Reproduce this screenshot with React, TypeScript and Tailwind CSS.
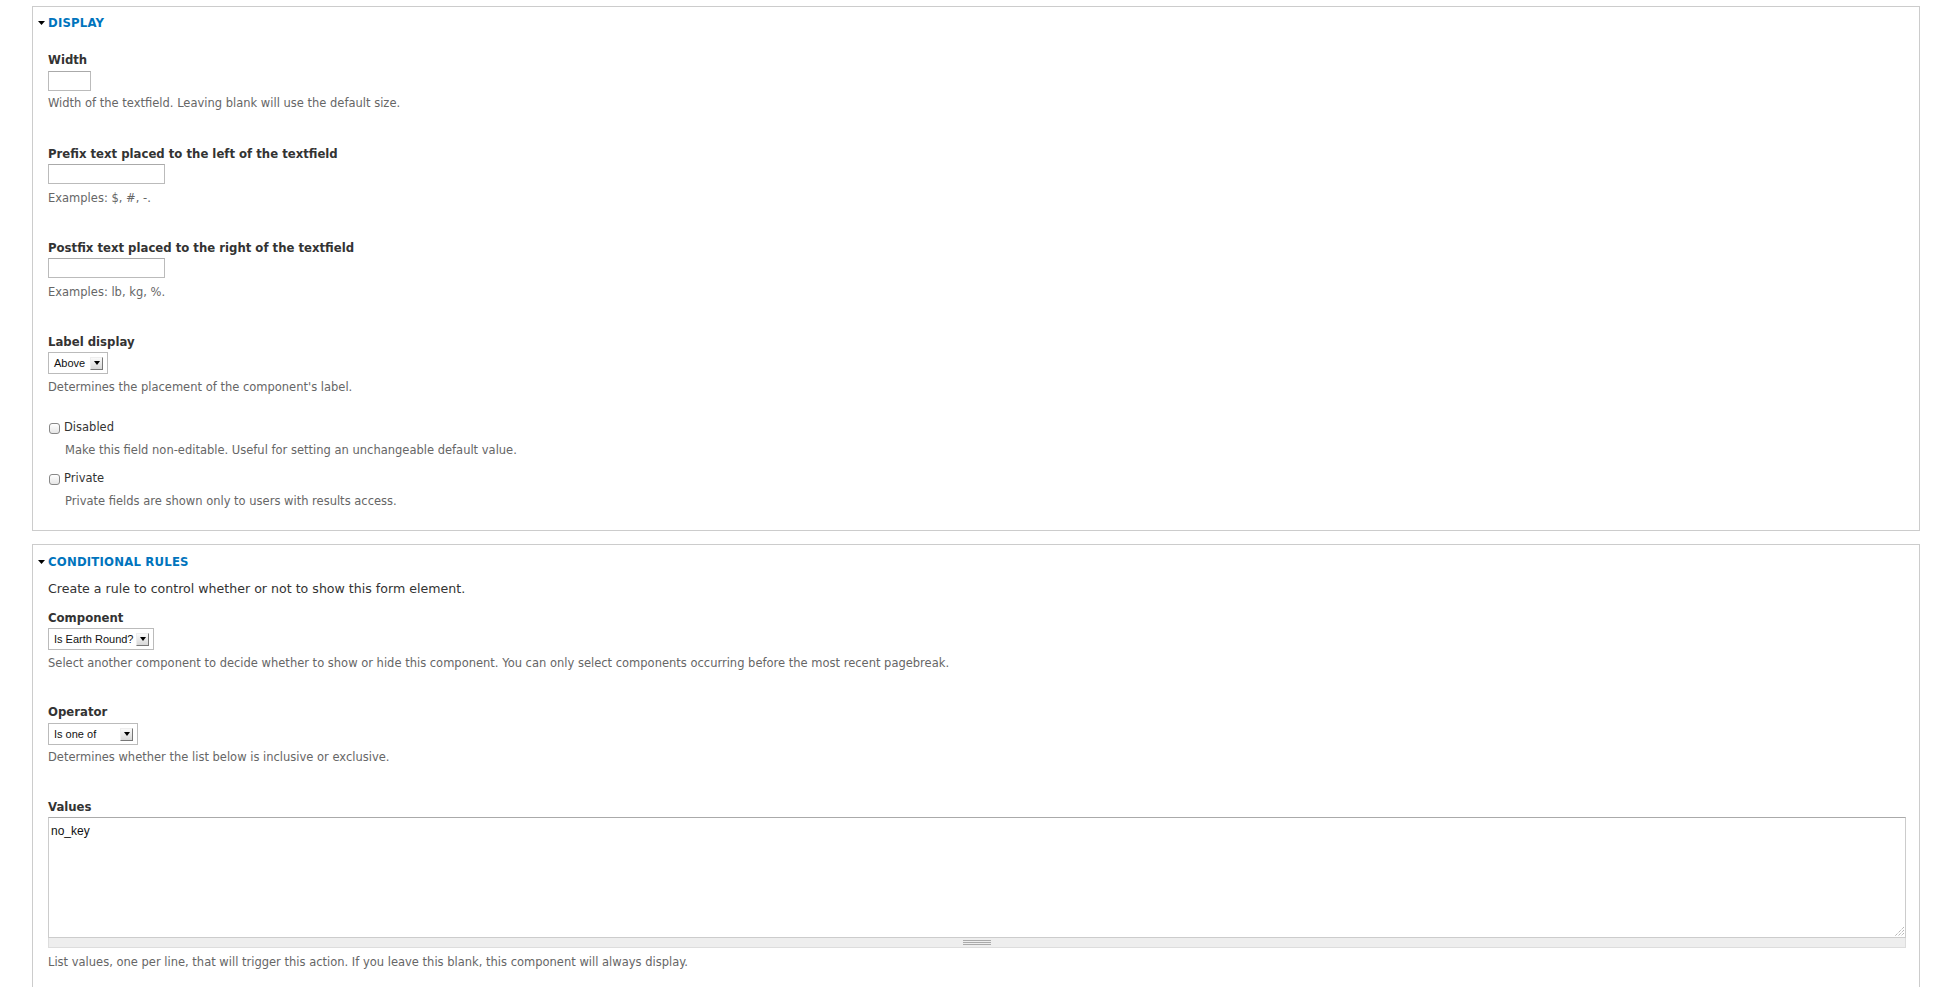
import React from "react";

const sans = "font-['Liberation_Sans',Arial,sans-serif]";
const ui = "font-['DejaVu_Sans','Noto_Sans',sans-serif]";

const Legend: React.FC<{ title: string }> = ({ title }) => (
  <div className="flex items-center h-[18px] -ml-[10px]">
    <svg width="7" height="4" viewBox="0 0 7 4" className="mr-[3px]">
      <polygon points="0,0 7,0 3.5,4" fill="#000" />
    </svg>
    <span className="text-[11.7px] font-bold tracking-[0.2px] text-[#0074bd] leading-[18px]">
      {title}
    </span>
  </div>
);

const Label: React.FC<{ text: string; className?: string }> = ({ text, className }) => (
  <div className={`text-[11.7px] font-bold text-[#333] leading-[18px] ${className ?? ""}`}>{text}</div>
);

const Desc: React.FC<{ text: string; className?: string }> = ({ text, className }) => (
  <div className={`text-[11.5px] text-[#666] leading-[16px] ${className ?? ""}`}>{text}</div>
);

const Select: React.FC<{ value: string; width: string; className?: string }> = ({
  value,
  width,
  className,
}) => (
  <div
    className={`flex items-center justify-between h-[22px] border border-[#bbb] bg-white pl-[5px] pr-[4px] ${width} ${className ?? ""}`}
  >
    <span className={`${sans} text-[11px] text-[#111]`}>{value}</span>
    <span className="flex items-center justify-center w-[13px] h-[13px] bg-gradient-to-b from-[#fafafa] to-[#d8d8d8] border-r border-b border-[#777] border-t border-l border-t-[#eee] border-l-[#eee]">
      <svg width="6" height="4" viewBox="0 0 6 4">
        <polygon points="0,0 6,0 3,4" fill="#000" />
      </svg>
    </span>
  </div>
);

const Checkbox: React.FC<{ label: string; desc: string; className?: string }> = ({
  label,
  desc,
  className,
}) => (
  <div className={className}>
    <div className="flex items-center h-[16px]">
      <span className="w-[11px] h-[11px] ml-[1px] mt-[2px] rounded-[3px] border border-[#888] bg-gradient-to-b from-white to-[#e6e6e6]" />
      <span className="ml-[4px] text-[11.5px] text-[#333] leading-[16px]">{label}</span>
    </div>
    <Desc text={desc} className="ml-[17px] mt-[7px]" />
  </div>
);

const TextInput: React.FC<{ width: string; className?: string }> = ({ width, className }) => (
  <div className={`h-[20px] border border-[#bbb] border-t-[#aaa] bg-white ${width} ${className ?? ""}`} />
);

export default function App() {
  return (
    <div className={`${ui} bg-white min-h-screen pt-[6px] pl-[32px] pr-[34px]`}>
      <div className="border border-[#ccc] pt-[7px] pl-[15px] pr-[13px] pb-[21px]">
        <Legend title="DISPLAY" />
        <Label text="Width" className="mt-[19px]" />
        <TextInput width="w-[43px]" className="mt-[2px]" />
        <Desc text="Width of the textfield. Leaving blank will use the default size." className="mt-[4px]" />

        <Label text="Prefix text placed to the left of the textfield" className="mt-[34px]" />
        <TextInput width="w-[117px]" className="mt-[1px]" />
        <Desc text="Examples: $, #, -." className="mt-[6px]" />

        <Label text="Postfix text placed to the right of the textfield" className="mt-[33px]" />
        <TextInput width="w-[117px]" className="mt-[1px]" />
        <Desc text="Examples: lb, kg, %." className="mt-[6px]" />

        <Label text="Label display" className="mt-[33px]" />
        <Select value="Above" width="w-[60px]" className="mt-[1px]" />
        <Desc text="Determines the placement of the component's label." className="mt-[5px]" />

        <Checkbox
          label="Disabled"
          desc="Make this field non-editable. Useful for setting an unchangeable default value."
          className="mt-[24px]"
        />
        <Checkbox
          label="Private"
          desc="Private fields are shown only to users with results access."
          className="mt-[12px]"
        />
      </div>

      <div className="mt-[13px] border border-[#ccc] pt-[8px] pl-[15px] pr-[13px] pb-[30px]">
        <Legend title="CONDITIONAL RULES" />
        <div className="mt-[9px] text-[12.6px] text-[#333] leading-[18px]">
          Create a rule to control whether or not to show this form element.
        </div>

        <Label text="Component" className="mt-[11px]" />
        <Select value="Is Earth Round?" width="w-[106px]" className="mt-[1px]" />
        <Desc
          text="Select another component to decide whether to show or hide this component. You can only select components occurring before the most recent pagebreak."
          className="mt-[5px]"
        />

        <Label text="Operator" className="mt-[32px]" />
        <Select value="Is one of" width="w-[90px]" className="mt-[2px]" />
        <Desc text="Determines whether the list below is inclusive or exclusive." className="mt-[4px]" />

        <Label text="Values" className="mt-[33px]" />
        <div className="mt-[1px] relative h-[121px] border border-[#ccc] border-t-[#aaa] bg-white">
          <div className={`${sans} text-[12px] text-[#111] pl-[2px] pt-[5px] leading-[16px]`}>no_key</div>
          <svg width="11" height="11" viewBox="0 0 11 11" className="absolute right-0 bottom-0">
            <line x1="10" y1="1" x2="1" y2="10" stroke="#999" strokeDasharray="1 1" />
            <line x1="10" y1="4" x2="4" y2="10" stroke="#999" strokeDasharray="1 1" />
            <line x1="10" y1="7" x2="7" y2="10" stroke="#999" strokeDasharray="1 1" />
          </svg>
        </div>
        <div className="h-[10px] bg-[#eee] border border-t-0 border-[#ddd] flex flex-col items-center justify-center gap-[1px]">
          <span className="block w-[28px] h-[1px] bg-[#aaa]" />
          <span className="block w-[28px] h-[1px] bg-[#aaa]" />
          <span className="block w-[28px] h-[1px] bg-[#aaa]" />
        </div>
        <Desc
          text="List values, one per line, that will trigger this action. If you leave this blank, this component will always display."
          className="mt-[6px]"
        />
      </div>
    </div>
  );
}
